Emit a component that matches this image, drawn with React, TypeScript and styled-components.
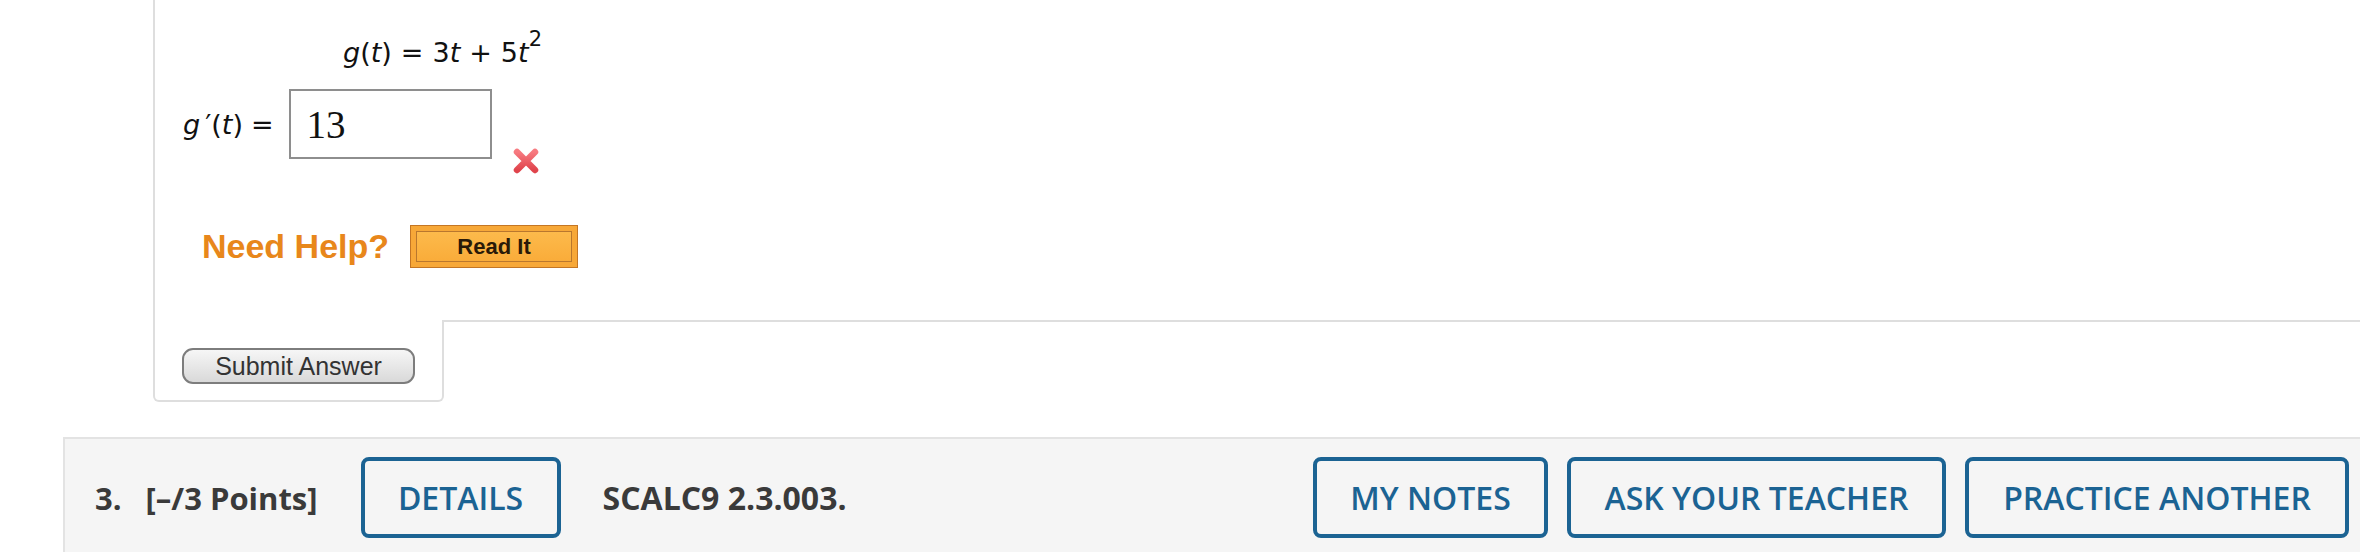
import React from "react";
import styled, { createGlobalStyle } from "styled-components";

const GlobalStyle = createGlobalStyle`
  html, body {
    margin: 0;
    padding: 0;
    background: #fff;
    overflow: hidden;
  }
  body {
    width: 2360px;
    height: 552px;
    font-family: "Liberation Sans", Arial, sans-serif;
  }
`;

const Page = styled.div`
  padding-left: 63px;
`;

const QuestionCard = styled.div`
  margin-left: 90px;
`;

const QuestionBody = styled.div`
  height: 320px;
  border-left: 2px solid #dedede;
  border-bottom: 2px solid #dedede;
  display: flex;
  flex-direction: column;
`;

const MathLine = styled.div`
  display: flex;
  align-items: center;
  font-family: "DejaVu Sans", Verdana, sans-serif;
  font-size: 27px;
  color: #111;
  white-space: nowrap;
`;

const Formula = styled(MathLine)`
  margin-top: 30px;
  padding-left: 188px;
  height: 44px;
`;

const Var = styled.i`
  font-style: italic;
`;

const Prime = styled.span`
  margin-left: 5px;
`;

const Op = styled.span<{ $gap?: number }>`
  margin: 0 ${(p) => p.$gap ?? 9}px;
`;

const Sup = styled.span`
  font-size: 21px;
  align-self: flex-start;
  margin-top: -3px;
  margin-left: 0;
`;

const AnswerRow = styled.div`
  margin-top: 15px;
  padding-left: 28px;
  display: flex;
  align-items: flex-start;
`;

const AnswerLabel = styled(MathLine)`
  height: 70px;
`;

const AnswerBox = styled.div`
  margin-left: 7px;
  width: 203px;
  height: 70px;
  box-sizing: border-box;
  border: 2px solid #8e8e8e;
  background: #fff;
  display: flex;
  align-items: center;
  padding-left: 16px;
  font-family: "Liberation Serif", "DejaVu Serif", serif;
  font-size: 39px;
  color: #111;
`;

const WrongMark = styled.svg`
  margin-left: 20px;
  margin-top: 59px;
  flex: none;
`;

const HelpRow = styled.div`
  margin-top: 51px;
  padding-left: 47px;
  display: flex;
  align-items: center;
`;

const NeedHelp = styled.span`
  font-family: "Liberation Sans", Arial, sans-serif;
  font-weight: bold;
  font-size: 34px;
  color: #e8871b;
`;

const ReadIt = styled.button`
  margin-left: 21px;
  width: 168px;
  height: 43px;
  border: 1px solid #c47624;
  background: linear-gradient(#fdbd4f, #f9a936);
  box-shadow: inset 0 0 0 5px #f7a838, inset 0 0 0 6px #b9772e;
  font-family: "Liberation Sans", Arial, sans-serif;
  font-weight: bold;
  font-size: 22px;
  color: #2a1a08;
  padding: 0;
  cursor: pointer;
`;

const SubmitTab = styled.div`
  margin-top: -2px;
  width: 291px;
  height: 82px;
  box-sizing: border-box;
  border: 2px solid #dedede;
  border-top: none;
  border-radius: 0 0 6px 6px;
  background: #fff;
  padding: 28px 0 0 27px;
`;

const SubmitButton = styled.button`
  width: 233px;
  height: 36px;
  border: 2px solid #7d7d7d;
  border-radius: 11px;
  background: linear-gradient(#f6f6f6, #d9d9d9);
  font-family: "Liberation Sans", Arial, sans-serif;
  font-size: 25px;
  line-height: 1;
  color: #333;
  padding: 0;
  cursor: pointer;
`;

const QuestionHeader = styled.div`
  margin-top: 35px;
  height: 140px;
  background: #f5f5f5;
  border-top: 2px solid #e3e3e3;
  border-left: 2px solid #e3e3e3;
  padding: 18px 11px 0 30px;
  display: flex;
  align-items: flex-start;
  font-family: "Open Sans", "Noto Sans", sans-serif;
`;

const HeaderText = styled.div`
  height: 81px;
  display: flex;
  align-items: center;
  font-weight: 700;
  font-size: 31px;
  color: #3a3a3a;
  white-space: nowrap;
`;

const Number = styled.span`
  margin-right: 24px;
`;

const Points = styled.span`
  margin-right: 43px;
`;

const Code = styled.span`
  margin-left: 42px;
  font-size: 32px;
`;

const OutlineButton = styled.button<{ $width: number }>`
  width: ${(p) => p.$width}px;
  height: 81px;
  box-sizing: border-box;
  border: 4px solid #1b6393;
  border-radius: 8px;
  background: transparent;
  font-family: "Open Sans", "Noto Sans", sans-serif;
  font-weight: 600;
  font-size: 32px;
  color: #1b6393;
  padding: 0;
  white-space: nowrap;
  flex: none;
  cursor: pointer;
`;

const RightActions = styled.div`
  margin-left: auto;
  display: flex;
  gap: 19px;
`;

function CrossIcon() {
  return (
    <WrongMark width="28" height="26" viewBox="0 0 28 26">
      <defs>
        <linearGradient id="xg" x1="0" y1="0" x2="0" y2="1">
          <stop offset="0" stopColor="#f77a80" />
          <stop offset="1" stopColor="#e0444c" />
        </linearGradient>
      </defs>
      <path
        d="M5 4 L23 22 M23 4 L5 22"
        stroke="url(#xg)"
        strokeWidth="6.5"
        strokeLinecap="round"
        fill="none"
      />
    </WrongMark>
  );
}

export default function App() {
  return (
    <Page>
      <GlobalStyle />
      <QuestionCard>
        <QuestionBody>
          <Formula>
            <Var>g</Var>(<Var>t</Var>)<Op>=</Op>3<Var>t</Var>
            <Op>+</Op>5<Var>t</Var>
            <Sup>2</Sup>
          </Formula>
          <AnswerRow>
            <AnswerLabel>
              <Var>g</Var>
              <Prime>′</Prime>(<Var>t</Var>)<Op $gap={8}>=</Op>
            </AnswerLabel>
            <AnswerBox>13</AnswerBox>
            <CrossIcon />
          </AnswerRow>
          <HelpRow>
            <NeedHelp>Need Help?</NeedHelp>
            <ReadIt>Read It</ReadIt>
          </HelpRow>
        </QuestionBody>
        <SubmitTab>
          <SubmitButton>Submit Answer</SubmitButton>
        </SubmitTab>
      </QuestionCard>
      <QuestionHeader>
        <HeaderText>
          <Number>3.</Number>
          <Points>[–/3 Points]</Points>
        </HeaderText>
        <OutlineButton $width={200}>DETAILS</OutlineButton>
        <HeaderText>
          <Code>SCALC9 2.3.003.</Code>
        </HeaderText>
        <RightActions>
          <OutlineButton $width={235}>MY NOTES</OutlineButton>
          <OutlineButton $width={379}>ASK YOUR TEACHER</OutlineButton>
          <OutlineButton $width={384}>PRACTICE ANOTHER</OutlineButton>
        </RightActions>
      </QuestionHeader>
    </Page>
  );
}
